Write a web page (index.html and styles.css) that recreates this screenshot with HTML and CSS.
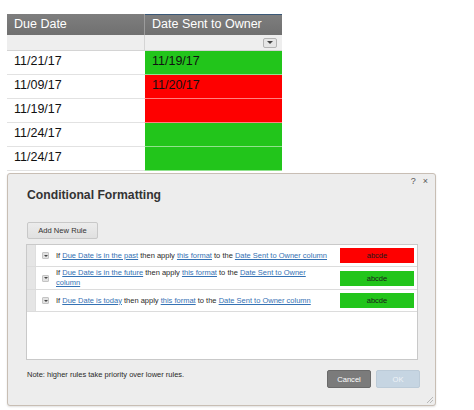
FILE: index.html
```html
<!DOCTYPE html>
<html>
<head>
<meta charset="utf-8">
<link rel="stylesheet" href="styles.css">
</head>
<body>
<div class="sheet">
  <div class="hcell">Due Date</div>
  <div class="hcell hcell-active">Date Sent to Owner</div>
  <div class="fcell"></div>
  <div class="fcell fcell-right"><span class="dd-btn"><span class="tri"></span></span></div>

  <div class="cell">11/21/17</div>
  <div class="cell cell-color green">11/19/17</div>
  <div class="cell">11/09/17</div>
  <div class="cell cell-color red">11/20/17</div>
  <div class="cell">11/19/17</div>
  <div class="cell cell-color red"></div>
  <div class="cell">11/24/17</div>
  <div class="cell cell-color green"></div>
  <div class="cell">11/24/17</div>
  <div class="cell cell-color green"></div>
</div>

<div class="dialog">
  <div class="dlg-top">
    <span class="dlg-ico">?</span>
    <span class="dlg-ico">×</span>
  </div>
  <div class="dlg-title">Conditional Formatting</div>
  <div class="add-btn">Add New Rule</div>
  <div class="rules">
    <div class="rule">
      <div class="handle"></div>
      <span class="rule-dd"><span class="tri-s"></span></span>
      <div class="rule-text">If <a>Due Date is in the past</a> then apply <a>this format</a> to the <a>Date Sent to Owner column</a></div>
      <div class="swatch red">abcde</div>
    </div>
    <div class="rule">
      <div class="handle"></div>
      <span class="rule-dd"><span class="tri-s"></span></span>
      <div class="rule-text">If <a>Due Date is in the future</a> then apply <a>this format</a> to the <a>Date Sent to Owner</a><br><a>column</a></div>
      <div class="swatch green">abcde</div>
    </div>
    <div class="rule">
      <div class="handle"></div>
      <span class="rule-dd"><span class="tri-s"></span></span>
      <div class="rule-text">If <a>Due Date is today</a> then apply <a>this format</a> to the <a>Date Sent to Owner column</a></div>
      <div class="swatch green">abcde</div>
    </div>
  </div>
  <div class="dlg-foot">
    <div class="note">Note: higher rules take priority over lower rules.</div>
    <div class="btn btn-cancel">Cancel</div>
    <div class="btn btn-ok">OK</div>
  </div>
  <svg class="grip" width="8" height="8" viewBox="0 0 8 8"><path d="M7 1 L1 7 M7 4 L4 7" stroke="#b9b9b9" stroke-width="1"/></svg>
</div>
</body>
</html>
```

FILE: styles.css
```css
* { box-sizing: border-box; }
body {
  margin: 0;
  background: #fff;
  font-family: "Liberation Sans", Arial, sans-serif;
  position: relative;
  width: 474px;
  height: 410px;
  overflow: hidden;
  color: #111;
}
.sheet {
  display: grid;
  grid-template-columns: 137px 138px;
  width: 275px;
  margin: 14px 0 0 7px;
}
.hcell {
  height: 21px;
  background: linear-gradient(#7e7e7e, #707070);
  color: #fff;
  font-size: 12.5px;
  line-height: 21px;
  padding: 0 7px;
}
.hcell-active {
  border-left: 1px solid #9c9c9c;
  box-shadow: inset 0 1px 0 #3a5877;
  padding-left: 7px;
}
.fcell {
  height: 16px;
  background: #eeeeee;
  border-bottom: 1px solid #d4d4d4;
}
.fcell-right {
  border-left: 1px solid #d4d4d4;
  display: flex;
  justify-content: flex-end;
  align-items: center;
  padding-right: 5px;
}
.dd-btn {
  width: 14px;
  height: 10px;
  background: #e6e6e6;
  border: 1px solid #b4b4b4;
  border-radius: 2px;
  display: flex;
  align-items: center;
  justify-content: center;
}
.tri {
  width: 0;
  height: 0;
  border-left: 3px solid transparent;
  border-right: 3px solid transparent;
  border-top: 3px solid #444;
}
.cell {
  height: 24px;
  font-size: 12.5px;
  line-height: 21px;
  padding: 0 7px;
  border-bottom: 1px solid #e2e2e2;
}
.cell-color {
  border-left: 1px solid #fff;
  border-bottom: 1px solid rgba(255, 255, 255, 0.5);
}
.green { background: #22c51b; }
.red { background: #fe0000; }

.dialog {
  position: absolute;
  left: 7px;
  top: 173px;
  width: 429px;
  height: 233px;
  background: #ededed;
  border: 1px solid #c8beb4;
  border-radius: 3px;
  box-shadow: 0 1px 2px rgba(0, 0, 0, 0.12);
  padding: 0 18px 0 18px;
  display: flex;
  flex-direction: column;
}
.dlg-top {
  height: 14px;
  display: flex;
  justify-content: flex-end;
  align-items: center;
  gap: 7px;
  margin-right: -11px;
}
.dlg-ico {
  font-size: 9px;
  color: #555;
  line-height: 14px;
}
.dlg-title {
  font-size: 12.2px;
  font-weight: bold;
  color: #333;
  line-height: 14px;
  margin-left: 1px;
}
.add-btn {
  margin-top: 20px;
  margin-left: 1px;
  width: 71px;
  height: 17px;
  background: linear-gradient(#ececec, #e0e0e0);
  border: 1px solid #c8c8c8;
  border-radius: 2px;
  font-size: 7.6px;
  color: #333;
  display: flex;
  align-items: center;
  justify-content: center;
}
.rules {
  margin-top: 5px;
  width: 392px;
  height: 116px;
  background: #fff;
  border: 1px solid #c9c9c9;
}
.rule {
  display: flex;
  align-items: center;
  border-bottom: 1px solid #dcdcdc;
  min-height: 22px;
}
.handle {
  align-self: stretch;
  width: 9px;
  background: #e5e5e5;
  border-right: 1px solid #dedede;
}
.rule-dd {
  margin-left: 6px;
  width: 7px;
  height: 7px;
  background: #e2e2e2;
  border: 1px solid #c4c4c4;
  border-radius: 1px;
  display: flex;
  align-items: center;
  justify-content: center;
}
.tri-s {
  width: 0;
  height: 0;
  border-left: 2px solid transparent;
  border-right: 2px solid transparent;
  border-top: 2px solid #444;
}
.rule-text {
  margin-left: 7px;
  width: 276px;
  font-size: 7.5px;
  line-height: 10px;
  color: #2a2a2a;
  padding: 1px 0;
}
.rule-text a {
  color: #3572b4;
  text-decoration: underline;
}
.swatch {
  margin-left: auto;
  margin-right: 3px;
  width: 74px;
  height: 15px;
  font-size: 7.5px;
  color: #1a1a1a;
  display: flex;
  align-items: center;
  justify-content: center;
}
.dlg-foot {
  margin-top: 10px;
  display: flex;
  align-items: flex-start;
  width: 393px;
  margin-left: 1px;
}
.note {
  font-size: 7.5px;
  line-height: 9px;
  color: #2a2a2a;
  flex: 1;
}
.btn {
  width: 44px;
  height: 18px;
  border-radius: 2px;
  font-size: 7.6px;
  display: flex;
  align-items: center;
  justify-content: center;
}
.btn-cancel {
  background: #7b7b7b;
  border: 1px solid #6a6a6a;
  color: #fff;
}
.btn-ok {
  margin-left: 5px;
  background: #c6d5e2;
  border: 1px solid #bccbd8;
  color: #eef3f7;
}
.grip {
  position: absolute;
  right: 1px;
  bottom: 1px;
}
```
